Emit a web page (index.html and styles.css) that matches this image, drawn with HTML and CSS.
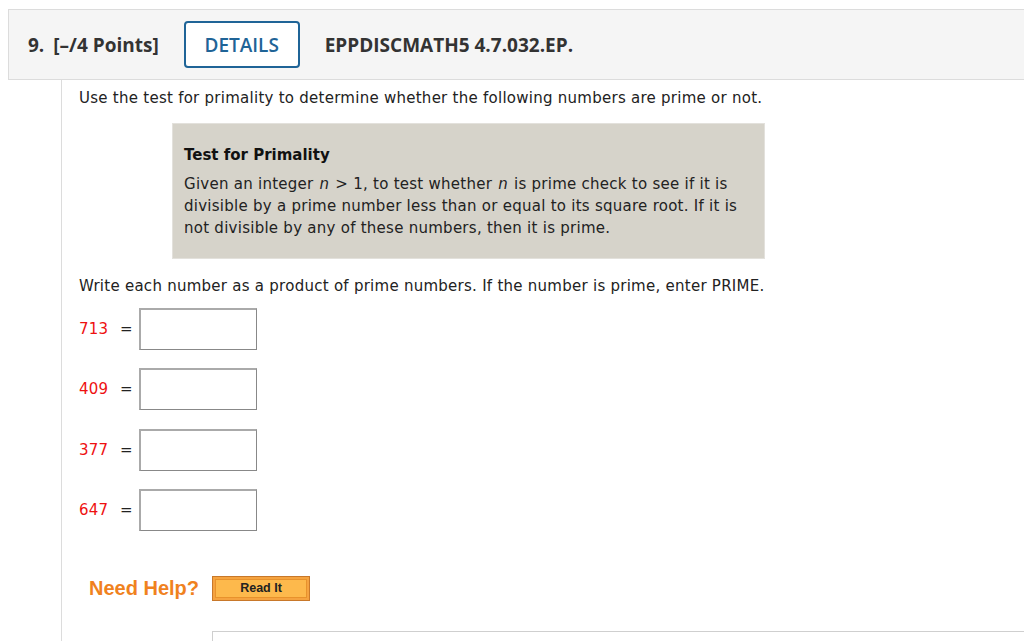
FILE: index.html
```html
<!DOCTYPE html>
<html>
<head>
<meta charset="utf-8">
<link rel="stylesheet" href="styles.css">
</head>
<body>
<div class="qhead">
  <span class="qnum">9.</span>
  <span class="qpts">[–/4 Points]</span>
  <button class="details">DETAILS</button>
  <span class="qcode">EPPDISCMATH5 4.7.032.EP.</span>
</div>
<div class="qbody">
  <p class="intro">Use the test for primality to determine whether the following numbers are prime or not.</p>
  <div class="note">
    <div class="note-title">Test for Primality</div>
    <p class="note-text">Given an integer <i>n</i> &gt; 1, to test whether <i>n</i> is prime check to see if it is divisible by a prime number less than or equal to its square root. If it is not divisible by any of these numbers, then it is prime.</p>
  </div>
  <p class="instr">Write each number as a product of prime numbers. If the number is prime, enter PRIME.</p>
  <div class="rows">
    <div class="row"><span class="num">713</span><span class="eq">=</span><input class="ans" type="text"></div>
    <div class="row"><span class="num">409</span><span class="eq">=</span><input class="ans" type="text"></div>
    <div class="row"><span class="num">377</span><span class="eq">=</span><input class="ans" type="text"></div>
    <div class="row"><span class="num">647</span><span class="eq">=</span><input class="ans" type="text"></div>
  </div>
  <div class="help">
    <span class="need">Need Help?</span>
    <button class="readit">Read It</button>
  </div>
  <div class="next"></div>
</div>
</body>
</html>
```
FILE: styles.css
```css
html, body {
  margin: 0;
  padding: 0;
  background: #fff;
  height: 100%;
  overflow: hidden;
}
body {
  font-family: "DejaVu Sans", Verdana, sans-serif;
  color: #222;
}
.qhead {
  margin: 9px 0 0 8px;
  height: 69px;
  background: #f5f5f5;
  border: 1px solid #dcdcdc;
  border-right: none;
  display: flex;
  align-items: center;
  padding-left: 19px;
  font-family: "Open Sans", sans-serif;
  font-weight: 700;
  font-size: 19px;
  color: #333;
}
.qnum { margin-right: 9px; }
.qpts { margin-right: 25px; }
.details {
  font-family: "Open Sans", sans-serif;
  font-weight: 600;
  font-size: 19px;
  color: #1f6497;
  background: #fff;
  border: 2px solid #1f6497;
  border-radius: 4px;
  width: 116px;
  height: 47px;
  margin-right: 25px;
  padding: 0;
}
.qcode { font-weight: 700; }
.qbody {
  margin-left: 61px;
  border-left: 1px solid #dcdcdc;
  padding-left: 17px;
  min-height: 600px;
}
.intro, .note, .instr, .num, .eq {
  font-size: 15px;
  letter-spacing: 0.26px;
}
.intro {
  margin: 0;
  padding-top: 8px;
  line-height: 20px;
}
.note {
  margin: 15px 0 0 93px;
  background: #d6d3ca;
  border: 1px solid #e3e1dc;
  padding: 20px 11px 15px 11px;
  box-sizing: border-box;
  width: 593px;
  height: 136px;
}
.note-title {
  font-weight: 700;
  line-height: 22px;
  color: #111;
  letter-spacing: 0;
}
.note-text {
  margin: 7px 0 0 0;
  line-height: 22px;
}
.note-text i { padding: 0 1px; }
.instr {
  margin: 16px 0 0 0;
  line-height: 22px;
}
.rows {
  margin-top: 11px;
  display: flex;
  flex-direction: column;
  gap: 18.3px;
}
.row {
  display: flex;
  align-items: center;
  height: 42px;
}
.num {
  color: #ee1111;
  width: 41px;
}
.eq {
  width: 19px;
}
.ans {
  width: 118px;
  height: 42px;
  box-sizing: border-box;
  border-width: 2px 1px 1px 2px;
  border-style: solid;
  border-color: #aaa #888 #888 #aaa;
  margin: 0;
  background: #fff;
}
.help {
  margin-top: 45px;
  margin-left: 10px;
  display: flex;
  align-items: center;
  gap: 13px;
}
.need {
  font-family: "Liberation Sans", Arial, sans-serif;
  font-weight: 700;
  font-size: 20px;
  color: #f0821e;
}
.readit {
  font-family: "Liberation Sans", Arial, sans-serif;
  font-weight: 700;
  font-size: 12.5px;
  color: #222;
  width: 98px;
  height: 25px;
  background: #fdb94c;
  border: 1px solid #c8782a;
  box-shadow: inset 0 0 0 2px #f5a340, inset 0 0 0 3px #e8922c;
  padding: 0;
}
.next {
  margin: 30px 0 0 133px;
  height: 40px;
  border: 1px solid #cfcfcf;
  border-right: none;
}
```
